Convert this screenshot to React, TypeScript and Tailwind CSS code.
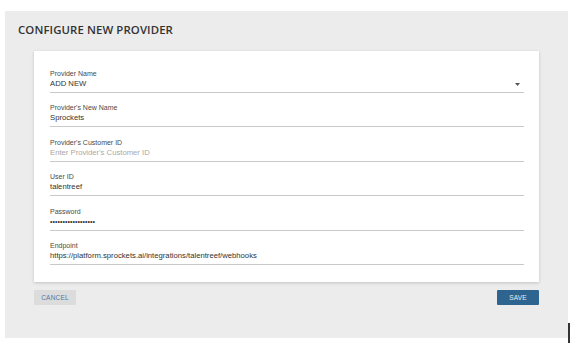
import React from "react";

const fields: { label: string; value: string; placeholder?: boolean; select?: boolean; password?: boolean }[] = [
  { label: "Provider Name", value: "ADD NEW", select: true },
  { label: "Provider's New Name", value: "Sprockets" },
  { label: "Provider's Customer ID", value: "Enter Provider's Customer ID", placeholder: true },
  { label: "User ID", value: "talentreef" },
  { label: "Password", value: "••••••••••••••••••", password: true },
  { label: "Endpoint", value: "https://platform.sprockets.ai/integrations/talentreef/webhooks" },
];

export default function App() {
  return (
    <div className="relative w-[570px] h-[343px] bg-white overflow-hidden" style={{ fontFamily: '"Liberation Sans", Arial, sans-serif' }}>
      <div className="ml-[5px] pt-[11px]">
        <div className="w-[563px] h-[327px] bg-[#ececec] flex flex-col">
          <h1
            className="pl-[13px] pt-[12px] h-[40px] text-[11.4px] leading-[14px] font-semibold text-[#333333] tracking-[0.1px]"
            style={{ fontFamily: '"Open Sans", sans-serif' }}
          >
            CONFIGURE NEW PROVIDER
          </h1>
          <div className="ml-[29px] w-[505px] bg-white shadow-[0_1px_3px_rgba(0,0,0,0.18)] pt-[18px] pb-[17px] pl-[16px] pr-[15px] flex flex-col gap-[10.4px]">
            {fields.map((f) => (
              <div key={f.label} className="flex flex-col border-b border-[#c9c9c9] pb-[2px]">
                <div className="text-[7px] leading-[9px] text-[#4a4a4a]">{f.label}</div>
                <div className="flex items-center justify-between h-[12px]">
                  <span
                    className={
                      "leading-[12px] " +
                      (f.placeholder ? "text-[#a8a8a8]" : "text-[#333333]") +
                      (f.password ? " tracking-[0.05px] text-[7px]" : " text-[7.7px]")
                    }
                  >
                    {f.value}
                  </span>
                  {f.select && (
                    <svg width="5" height="3" viewBox="0 0 5 3" className="mr-[4px] mt-[1px]">
                      <path d="M0 0 H5 L2.5 3 Z" fill="#555555" />
                    </svg>
                  )}
                </div>
              </div>
            ))}
          </div>
          <div className="ml-[29px] w-[505px] mt-[8px] flex justify-between">
            <button className="w-[42px] h-[15px] bg-[#dcdcdc] text-[#4a7aa6] text-[6.5px] leading-[15px] tracking-[0.2px] rounded-[1px]">
              CANCEL
            </button>
            <button className="w-[42px] h-[15px] bg-[#2e6590] text-[#e8eef4] text-[6.5px] leading-[15px] tracking-[0.2px] rounded-[1px]">
              SAVE
            </button>
          </div>
        </div>
      </div>
      <div className="absolute left-[568px] top-[323px] w-[1.5px] h-[20px] bg-[#333333]" />
    </div>
  );
}
